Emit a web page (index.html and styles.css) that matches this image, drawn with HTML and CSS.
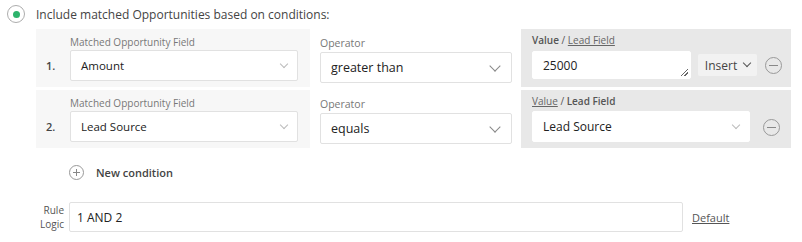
FILE: index.html
```html
<!DOCTYPE html>
<html lang="en">
<head>
    <meta charset="UTF-8">
    <title>Matching Rules</title>
    <link rel="stylesheet" href="styles.css">
</head>
<body>
    <div class="rule-head">
        <span class="radio"><span class="radio-dot"></span></span>
        <span class="rule-title">Include matched Opportunities based on conditions:</span>
    </div>

    <div class="condition">
        <div class="cell cell-field">
            <span class="num"></span>
            <label class="lbl">Matched Opportunity Field</label>
            <span class="num">1.</span>
            <div class="box box-field">Amount <span class="chev light"></span></div>
        </div>
        <div class="cell cell-op">
            <label class="lbl">Operator</label>
            <div class="box box-op">greater than <span class="chev big"></span></div>
        </div>
        <div class="cell cell-value">
            <label class="lbl"><b>Value</b> / <a href="#">Lead Field</a></label>
            <div class="value-row">
                <div class="box box-text">25000 <span class="grip"></span></div>
                <div class="insert">Insert <span class="chev dark"></span></div>
                <span class="remove"></span>
            </div>
        </div>
    </div>

    <div class="condition">
        <div class="cell cell-field">
            <span class="num"></span>
            <label class="lbl">Matched Opportunity Field</label>
            <span class="num">2.</span>
            <div class="box box-field">Lead Source <span class="chev light"></span></div>
        </div>
        <div class="cell cell-op">
            <label class="lbl">Operator</label>
            <div class="box box-op">equals <span class="chev big"></span></div>
        </div>
        <div class="cell cell-value">
            <label class="lbl"><a href="#">Value</a> / <b>Lead Field</b></label>
            <div class="value-row">
                <div class="box box-lead">Lead Source <span class="chev light"></span></div>
                <span class="remove"></span>
            </div>
        </div>
    </div>

    <div class="new-cond">
        <span class="add"></span>
        <span>New condition</span>
    </div>

    <div class="logic">
        <div class="logic-lbl"><span>Rule</span><span>Logic</span></div>
        <div class="box box-logic">1 AND 2</div>
        <a href="#" class="default">Default</a>
    </div>
</body>
</html>
```

FILE: styles.css
```css
* {
    margin: 0;
    padding: 0;
    box-sizing: border-box;
}

body {
    width: 802px;
    height: 242px;
    background: white;
    font-family: "Open Sans", Arial, sans-serif;
    color: #333;
    padding: 5px 0 0 7px;
}

.rule-head {
    display: flex;
    align-items: center;
    gap: 11px;
    height: 18px;
}

.radio {
    width: 18px;
    height: 18px;
    border: 1px solid #adadad;
    border-radius: 50%;
    display: flex;
    align-items: center;
    justify-content: center;
}

.radio-dot {
    width: 7px;
    height: 7px;
    border-radius: 50%;
    background: #2db36c;
}

.rule-title {
    font-size: 12px;
    color: #444;
}

.condition {
    display: flex;
    margin: 6px 0 0 29px;
    height: 58px;
}

.condition + .condition {
    margin-top: 3px;
}

.cell {
    height: 58px;
}

.lbl {
    display: block;
    font-size: 10px;
    line-height: 14px;
    color: #777;
}

.cell-field {
    width: 274px;
    background: #f7f7f7;
    padding-top: 6px;
    display: grid;
    grid-template-columns: 34px 228px;
    grid-template-rows: 15px 31px;
}

.num {
    font-size: 11px;
    font-weight: 600;
    color: #444;
    padding-left: 10px;
    align-self: center;
}

.box {
    background: white;
    border: 1px solid #e1e1e1;
    border-radius: 2px;
    font-size: 11.5px;
    color: #222;
    display: flex;
    align-items: center;
    justify-content: space-between;
    padding: 0 10px;
}

.box-field {
    height: 31px;
}

.cell-op {
    width: 211px;
    padding: 7px 9px 0 10px;
}

.cell-op .lbl {
    margin-bottom: 2px;
    font-size: 10.5px;
}

.box-op {
    height: 31px;
    font-size: 12.5px;
}

.cell-value {
    width: 270px;
    background: #e8e8e8;
    padding: 4px 0 0 11px;
}

.cell-value .lbl {
    color: #555;
    margin-bottom: 4px;
}

.cell-value .lbl b {
    font-weight: 600;
}

.cell-value .lbl a {
    color: #666;
}

.value-row {
    display: flex;
    align-items: center;
}

.box-text {
    width: 159px;
    height: 28px;
    border-color: white;
    font-size: 12px;
    position: relative;
}

.grip {
    position: absolute;
    right: 2px;
    bottom: 2px;
    width: 7px;
    height: 7px;
    background: linear-gradient(135deg, transparent 45%, #666 45%, #666 55%, transparent 55%, transparent 70%, #666 70%, #666 80%, transparent 80%);
}

.insert {
    margin-left: 7px;
    width: 59px;
    height: 22px;
    background: #f2f2f2;
    border-radius: 2px;
    font-size: 12px;
    color: #444;
    display: flex;
    align-items: center;
    justify-content: center;
    gap: 7px;
}

.remove,
.add {
    position: relative;
    width: 17px;
    height: 17px;
    border: 1px solid #999;
    border-radius: 50%;
    margin-left: 8px;
}

.remove::before,
.add::before,
.add::after {
    content: "";
    position: absolute;
    left: 3px;
    right: 3px;
    top: 7px;
    height: 1px;
    background: #888;
}

.add::after {
    left: 7px;
    right: auto;
    width: 1px;
    top: 3px;
    height: 9px;
}

.box-lead {
    width: 218px;
    height: 31px;
    border-color: white;
    margin-top: -1px;
    margin-right: 5px;
    font-size: 12px;
}

.chev {
    width: 6px;
    height: 6px;
    border-right: 1px solid #bbb;
    border-bottom: 1px solid #bbb;
    transform: rotate(45deg);
    margin-top: -4px;
}

.chev.big {
    width: 8px;
    height: 8px;
    border-color: #888;
    margin-right: 2px;
}

.chev.dark {
    width: 6px;
    height: 6px;
    border-color: #555;
}

.new-cond {
    display: flex;
    align-items: center;
    margin: 17px 0 0 62px;
    font-size: 11px;
    font-weight: 600;
    color: #444;
    gap: 12px;
}

.new-cond .add {
    width: 15px;
    height: 15px;
    margin-left: 0;
}

.new-cond .add::before {
    top: 6px;
}

.new-cond .add::after {
    left: 6px;
    top: 3px;
    height: 7px;
}

.logic {
    display: flex;
    align-items: center;
    margin-top: 22px;
}

.logic-lbl {
    width: 57px;
    display: flex;
    flex-direction: column;
    align-items: flex-end;
    font-size: 10px;
    line-height: 14px;
    color: #555;
}

.box-logic {
    margin-left: 5px;
    width: 614px;
    height: 30px;
    font-size: 12px;
    padding-left: 7px;
}

.default {
    margin-left: 9px;
    font-size: 11px;
    color: #555;
}
```
